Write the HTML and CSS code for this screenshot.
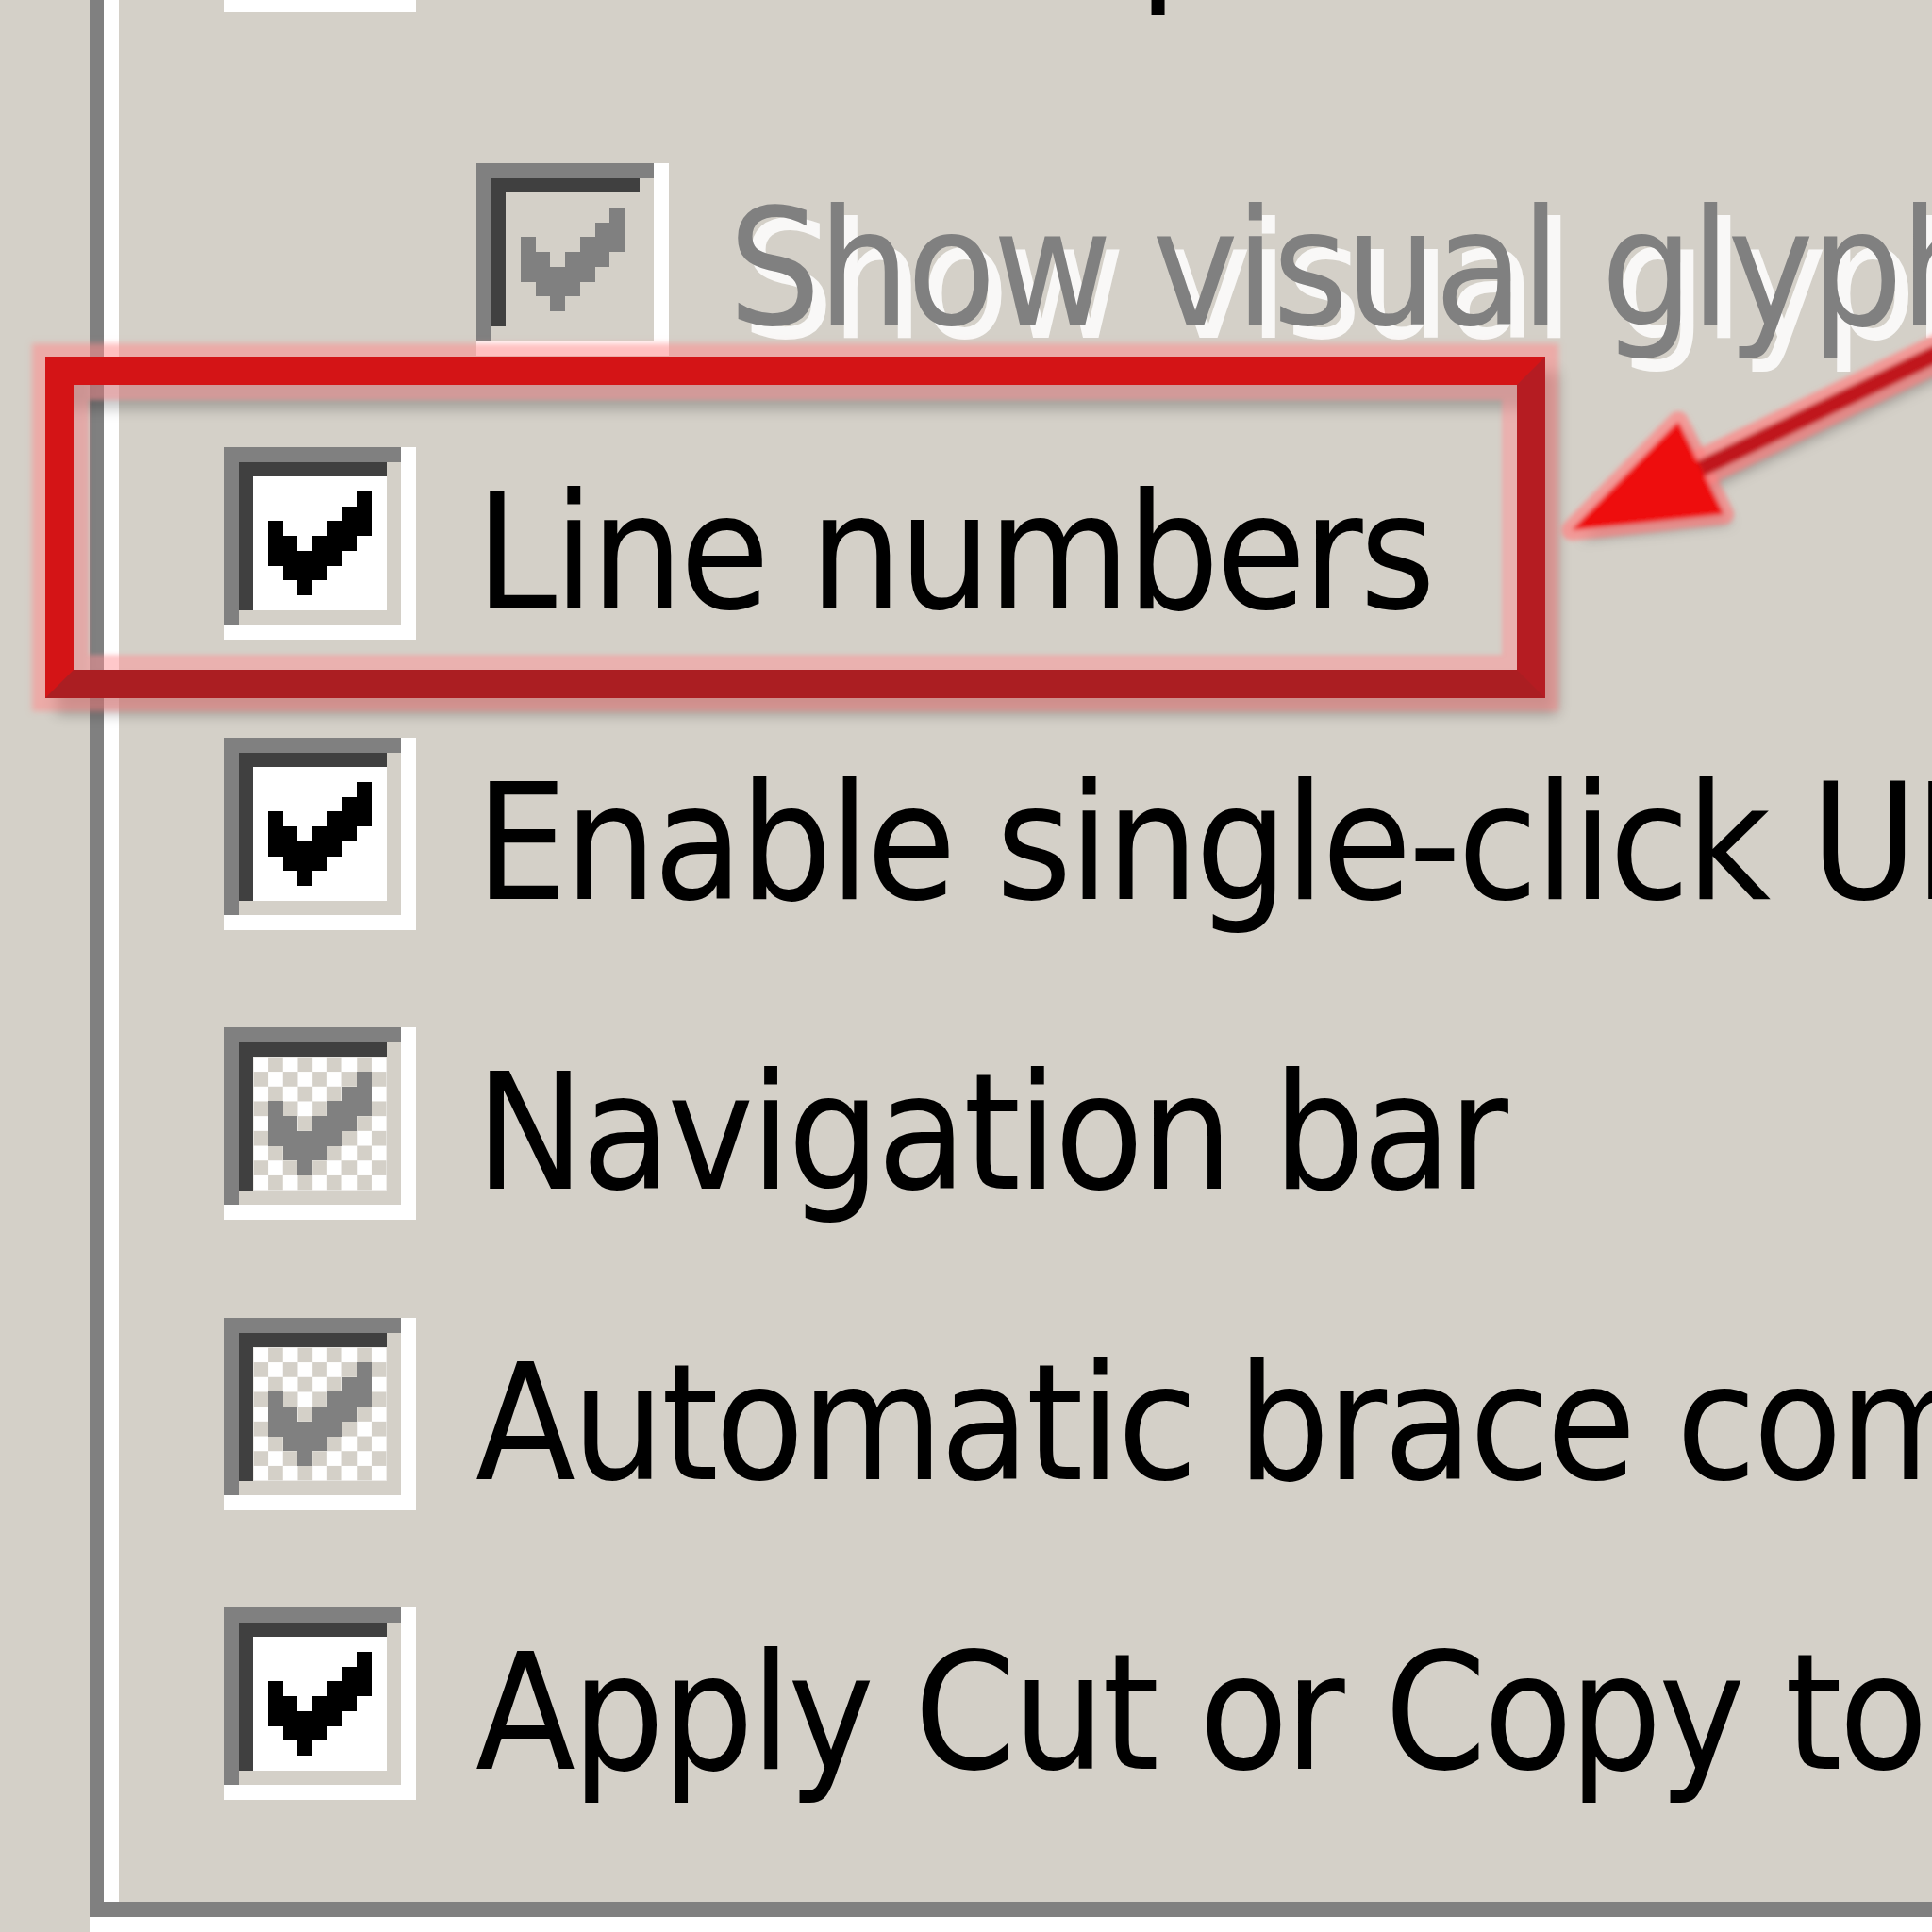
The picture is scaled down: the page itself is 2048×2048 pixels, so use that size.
FILE: index.html
```html
<!DOCTYPE html>
<html lang="en">
<head>
  <meta charset="UTF-8">
  <title>Options - Text Editor - General</title>
  <link rel="stylesheet" href="styles.css">
</head>
<body>

<svg class="defs" width="0" height="0">
  <defs>
    <pattern id="dither" width="2" height="2" patternUnits="userSpaceOnUse">
      <rect width="2" height="2" fill="#d4d0c8"/>
      <rect width="1" height="1" fill="#ffffff"/>
      <rect x="1" y="1" width="1" height="1" fill="#ffffff"/>
    </pattern>
    <symbol id="frame" viewBox="0 0 13 13">
      <rect x="0" y="0" width="12" height="1" fill="#808080"/>
      <rect x="0" y="0" width="1" height="12" fill="#808080"/>
      <rect x="1" y="1" width="10" height="1" fill="#404040"/>
      <rect x="1" y="1" width="1" height="10" fill="#404040"/>
      <rect x="11" y="1" width="1" height="11" fill="#d4d0c8"/>
      <rect x="1" y="11" width="11" height="1" fill="#d4d0c8"/>
      <rect x="12" y="0" width="1" height="13" fill="#ffffff"/>
      <rect x="0" y="12" width="13" height="1" fill="#ffffff"/>
    </symbol>
    <path id="tick" d="M9 3h1v1h-1z M8 4h2v1h-2z M3 5h1v1h-1z M7 5h3v1h-3z M3 6h2v1h-2z M6 6h3v1h-3z M3 7h5v1h-5z M4 8h3v1h-3z M5 9h1v1h-1z"/>
    <filter id="blur-soft"><feGaussianBlur stdDeviation="2.5"/></filter>
    <filter id="blur-shadow"><feGaussianBlur stdDeviation="7"/></filter>
  </defs>
</svg>

<div class="page">

  <div class="group">
    <div class="group-inner">
      <ul class="options">
        <li class="option">
          <svg class="cb" viewBox="0 0 13 13"><use href="#frame"/><rect class="cb-face" x="2" y="2" width="9" height="9"/><use class="cb-tick" href="#tick"/></svg>
          <span class="label">Word wrap</span>
        </li>
        <li class="option option-sub is-disabled">
          <svg class="cb" viewBox="0 0 13 13"><use href="#frame"/><rect class="cb-face" x="2" y="2" width="9" height="9"/><use class="cb-tick" href="#tick"/></svg>
          <span class="label">Show visual glyphs for word wrap</span>
        </li>
        <li class="option">
          <svg class="cb" viewBox="0 0 13 13"><use href="#frame"/><rect class="cb-face" x="2" y="2" width="9" height="9"/><use class="cb-tick" href="#tick"/></svg>
          <span class="label">Line numbers</span>
        </li>
        <li class="option">
          <svg class="cb" viewBox="0 0 13 13"><use href="#frame"/><rect class="cb-face" x="2" y="2" width="9" height="9"/><use class="cb-tick" href="#tick"/></svg>
          <span class="label">Enable single-click URL navigation</span>
        </li>
        <li class="option is-mixed">
          <svg class="cb" viewBox="0 0 13 13"><use href="#frame"/><rect class="cb-face" x="2" y="2" width="9" height="9"/><use class="cb-tick" href="#tick"/></svg>
          <span class="label">Navigation bar</span>
        </li>
        <li class="option is-mixed">
          <svg class="cb" viewBox="0 0 13 13"><use href="#frame"/><rect class="cb-face" x="2" y="2" width="9" height="9"/><use class="cb-tick" href="#tick"/></svg>
          <span class="label">Automatic brace completion</span>
        </li>
        <li class="option">
          <svg class="cb" viewBox="0 0 13 13"><use href="#frame"/><rect class="cb-face" x="2" y="2" width="9" height="9"/><use class="cb-tick" href="#tick"/></svg>
          <span class="label">Apply Cut or Copy to blank lines when there is no selection</span>
        </li>
      </ul>
    </div>
  </div>

  <!-- annotation: red frame round the option + arrow -->
  <div class="highlight"></div>

  <svg class="arrow" viewBox="1580 320 468 300">
    <g class="arrow-shadow" filter="url(#blur-shadow)">
      <line x1="1790" y1="515" x2="2070" y2="379"/>
      <polygon points="1676,572 1787,457 1835,555"/>
    </g>
    <g filter="url(#blur-soft)">
      <line class="arrow-glow" x1="1780" y1="508" x2="2070" y2="367"/>
      <polygon class="arrow-glow" points="1666,562 1779,447 1827,545"/>
      <line class="arrow-line" x1="1780" y1="508" x2="2070" y2="367"/>
      <polygon class="arrow-head" points="1666,562 1779,447 1827,545"/>
    </g>
  </svg>

</div>

</body>
</html>
```

FILE: styles.css
```css
html, body {
  margin: 0;
  padding: 0;
}

body {
  background: #d4d0c8;
  color: #000000;
}

.defs {
  position: absolute;
  width: 0;
  height: 0;
}

.page {
  position: relative;
  width: 2048px;
  height: 2048px;
  overflow: hidden;
}

/* etched group box, its top and right side are out of the picture */
.group {
  margin-top: -300px;
  margin-left: 95px;
  width: 2300px;
  height: 2316px;
  border-left: 15px solid #808080;
  border-bottom: 16px solid #808080;
  box-shadow: 0 16px 0 #ffffff;
}

.group-inner {
  height: 100%;
  border-left: 16px solid #ffffff;
}

.options {
  list-style: none;
  margin: 0;
  padding: 109px 0 0 111px;
  display: flex;
  flex-direction: column;
  gap: 103.5px;
}

.option {
  display: flex;
  align-items: flex-start;
  height: 204px;
}

.option-sub {
  margin-top: 56.5px;
  margin-bottom: -6.5px;
  padding-left: 268px;
}

.cb {
  flex: none;
  width: 204px;
  height: 204px;
  shape-rendering: crispEdges;
}

.cb-face {
  fill: #ffffff;
}

.cb-tick {
  fill: #000000;
}

.is-mixed .cb-face {
  fill: url(#dither);
}

.is-mixed .cb-tick,
.is-disabled .cb-tick {
  fill: #808080;
}

.is-disabled .cb-face {
  fill: #d4d0c8;
}

.label {
  margin-left: 63px;
  padding-top: 10px;
  font-family: "DejaVu Sans Condensed", "DejaVu Sans", sans-serif;
  font-size: 172px;
  line-height: 204px;
  letter-spacing: -3.5px;
  white-space: nowrap;
}

.is-disabled .label {
  color: #808080;
  text-shadow: 14px 14px 0 rgba(255, 255, 255, 0.85);
}

.highlight {
  position: absolute;
  left: 48px;
  top: 378px;
  width: 1590px;
  height: 362px;
  box-sizing: border-box;
  border: 30px solid #d41416;
  border-right-color: #b51c22;
  border-bottom-color: #ab1e22;
  box-shadow:
    0 0 6px 14px rgba(255, 140, 140, 0.55),
    12px 16px 14px rgba(0, 0, 0, 0.3),
    inset 0 0 4px 16px rgba(255, 145, 150, 0.5),
    inset 0 40px 14px -14px rgba(0, 0, 0, 0.22),
    inset 22px 0 10px -6px rgba(0, 0, 0, 0.08);
}

.arrow {
  position: absolute;
  left: 1580px;
  top: 320px;
  width: 468px;
  height: 300px;
}

.arrow-shadow line {
  stroke: rgba(0, 0, 0, 0.28);
  stroke-width: 26;
}

.arrow-shadow polygon {
  fill: rgba(0, 0, 0, 0.28);
}

line.arrow-glow {
  stroke: rgba(255, 130, 130, 0.7);
  stroke-width: 40;
}

polygon.arrow-glow {
  fill: none;
  stroke: rgba(255, 130, 130, 0.7);
  stroke-width: 22;
  stroke-linejoin: round;
}

.arrow-line {
  stroke: #c0161c;
  stroke-width: 18;
}

.arrow-head {
  fill: #ee1010;
}
```
